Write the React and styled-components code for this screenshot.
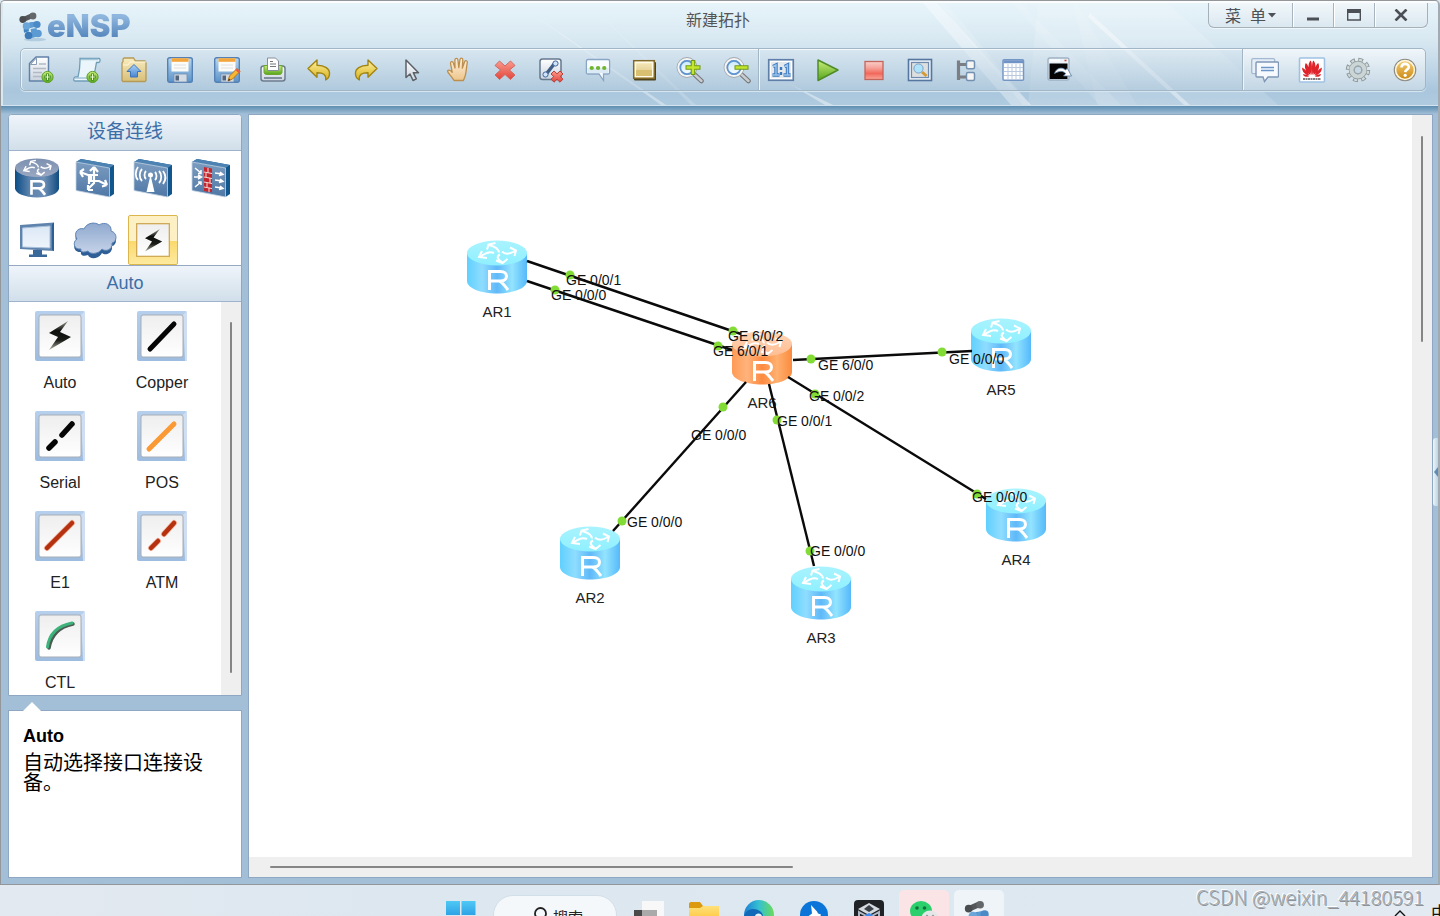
import React from 'react';
import styled, { createGlobalStyle } from 'styled-components';

const sans = '"Liberation Sans", "Noto Sans CJK SC", sans-serif';

const GlobalStyle = createGlobalStyle`
  * { box-sizing: border-box; }
  html, body { margin: 0; height: 100%; }
  #root { height: 100%; }
  body { font-family: ${sans}; color: #222; overflow: hidden; }
  button { font: inherit; color: inherit; border: 0; padding: 0; background: none; cursor: pointer; }
`;

const Desktop = styled.div`
  position: relative;
  height: 100vh;
  display: flex;
  flex-direction: column;
  overflow: hidden;
  background: #dde8f0;
`;

const Defs = styled.svg`
  position: absolute;
  width: 0;
  height: 0;
`;

/* ---------- window ---------- */

const Window = styled.div`
  position: relative;
  flex: 1;
  min-height: 0;
  display: flex;
  flex-direction: column;
  border: 1px solid #94979a;
  border-right: 2px solid #a3abb2;
  border-radius: 5px 5px 0 0;
  background: #a2bfd7;
  overflow: hidden;
`;

const Header = styled.header`
  position: relative;
  height: 105px;
  padding: 0 10px 0 17px;
  border-top: 2px solid #fbfdfe;
  border-left: 2px solid #d9e7f0;
  border-bottom: 1px solid #d4e3ee;
  background: linear-gradient(#e7f4fa, #d9e9f2 35%, #c3d9e8 60%, #a9c6dd 86%, #b0cbdf);
`;

const Shine = styled.svg`
  position: absolute;
  top: 0;
  right: 0;
  width: 920px;
  height: 102px;
  pointer-events: none;
`;

const TitleBar = styled.div`
  position: relative;
  display: grid;
  grid-template-columns: 1fr auto 1fr;
  height: 45px;
`;

const Brand = styled.div`
  display: flex;
  align-items: flex-start;
  padding-top: 7px;
  margin-left: -3px;
`;

const BrandName = styled.span`
  font: 900 31px/32px Inter, "Liberation Sans", sans-serif;
  color: transparent;
  background: linear-gradient(#8fb6de 20%, #5a8abf 80%);
  background-clip: text;
`;

const DocTitle = styled.h1`
  margin: 0;
  padding: 6px 12px 0 0;
  font: 400 16px/24px ${sans};
  color: #555;
`;

const Controls = styled.div`
  justify-self: end;
  display: flex;
  height: 25px;
  border: 1px solid #a5b0b9;
  border-top: 0;
  border-radius: 0 0 6px 6px;
  background: linear-gradient(#f1f7fa, #dbe8f0);
  box-shadow: 0 1px 0 #eef6fa;
`;

const ControlButton = styled.button`
  display: flex;
  align-items: center;
  justify-content: center;
  gap: 2px;
  width: ${(p) => p.$width}px;
  font-size: 16px;
  white-space: pre;
  color: #4c5258;
  & + & { border-left: 1px solid #a9b5be; box-shadow: inset 1px 0 0 #fff; }
`;

const Toolbar = styled.div`
  position: relative;
  display: flex;
  height: 43px;
  margin-right: 2px;
  border: 1px solid #a3b6c5;
  border-radius: 5px;
  background: linear-gradient(#e0ebf37a, #b6ccdd7a);
  box-shadow: inset 0 1px 0 #f2f8fb, inset 1px 0 0 #e8f1f7, 0 1px 1px #d8e8f3;
`;

const ToolGroup = styled.div`
  display: flex;
  align-items: center;
  justify-content: space-between;
  width: ${(p) => p.$width}px;
  padding: 0 ${(p) => (p.$lead ? 3 : 2)}px 0 ${(p) => (p.$lead ? 2 : 4)}px;
  ${(p) => p.$ruled && 'border-left: 1px solid #a3b6c5; box-shadow: inset 1px 0 0 #eef5f9;'}
  ${(p) => p.$end && 'margin-left: auto; background: linear-gradient(#f0f6fa, #c3d6e4); border-radius: 0 5px 5px 0;'}
`;

const ToolButton = styled.button`
  display: flex;
  align-items: center;
  justify-content: center;
  width: 36px;
  height: 36px;
`;

const Body = styled.div`
  flex: 1;
  min-height: 0;
  display: flex;
  gap: 6px;
  padding: 8px 5px 6px 7px;
  background: linear-gradient(#5d8db1, #a2bfd7 8px);
`;

const Sidebar = styled.aside`
  display: flex;
  flex-direction: column;
  gap: 14px;
  width: 234px;
`;

const Panel = styled.section`
  position: relative;
  border: 1px solid #8ea7c3;
  background: #fff;
`;

const DevicePanel = styled(Panel)`
  flex: 1;
  min-height: 0;
  display: flex;
  flex-direction: column;
  overflow: hidden;
  border-radius: 4px 4px 0 0;
`;

const SectionTitle = styled.h2`
  margin: 0;
  height: 36px;
  flex: none;
  font: 400 ${(p) => (p.$cjk ? 19 : 18)}px/34px ${sans};
  text-align: center;
  color: #3c6fa8;
  border-bottom: 1px solid #9fb3cd;
  background: linear-gradient(#eff4fa, #d1dfea);
`;

const DeviceGrid = styled.div`
  flex: none;
  display: grid;
  grid-template-columns: repeat(4, 50px);
  grid-auto-rows: 50px;
  gap: 12px 8px;
  padding: 2px 3px 0;
  border-bottom: 1px solid #95a9c2;
`;

const DeviceButton = styled.button`
  display: flex;
  align-items: center;
  justify-content: center;
  border: 1px solid ${(p) => (p.$active ? '#dcb54d' : 'transparent')};
  border-radius: 2px;
  background: ${(p) => (p.$active ? 'linear-gradient(#fdf0c4 52%, #fbd96c 53%, #fdeaa0)' : 'none')};
`;

const CableScroll = styled.div`
  flex: 1;
  min-height: 0;
  display: flex;
  overflow: hidden;
`;

const CableList = styled.div`
  flex: 1;
  display: grid;
  grid-template-columns: repeat(2, 102px);
  grid-auto-rows: 100px;
  padding-top: 9px;
`;

const CableButton = styled.button`
  display: flex;
  flex-direction: column;
  align-items: center;
  gap: 12px;
  height: 84px;
  font-size: 16px;
  line-height: 20px;
`;

const TrackV = styled.div`
  display: flex;
  justify-content: center;
  width: 20px;
  padding-top: ${(p) => p.$top}px;
  background: #efefef;
`;

const ThumbV = styled.div`
  width: 2px;
  height: ${(p) => p.$length};
  border-radius: 1px;
  background: #858585;
`;

const TrackH = styled.div`
  grid-column: 1 / 3;
  display: flex;
  align-items: center;
  padding-left: 21px;
  background: #efefef;
`;

const ThumbH = styled.div`
  width: 45%;
  height: 2px;
  border-radius: 1px;
  background: #858585;
`;

const InfoPanel = styled(Panel)`
  height: 168px;
  padding: 15px 28px 15px 14px;
  color: #000;
  &::before {
    content: '';
    position: absolute;
    top: -9px;
    left: 14px;
    border: 9px solid transparent;
    border-top: 0;
    border-bottom-color: #fff;
  }
`;

const InfoTitle = styled.h3`
  margin: 0 0 7px;
  font: 700 18px/20px ${sans};
`;

const InfoText = styled.p`
  margin: 0;
  font-size: 20px;
  line-height: 20px;
`;

const Workspace = styled.main`
  flex: 1;
  min-width: 0;
  display: grid;
  grid-template-columns: 1fr 20px;
  grid-template-rows: 1fr 20px;
  border: 1px solid #8ea7c3;
`;

const Canvas = styled.div`
  position: relative;
  overflow: hidden;
  background: #fff;
`;

const Links = styled.svg`
  position: absolute;
  inset: 0;
  width: 100%;
  height: 100%;
`;

const Node = styled.div`
  position: absolute;
  left: ${(p) => p.$x}px;
  top: ${(p) => p.$y}px;
  display: flex;
  flex-direction: column;
  align-items: center;
  gap: 9px;
  width: 60px;
  font-size: 15px;
  line-height: 18px;
`;

const PortLabel = styled.span`
  position: absolute;
  left: ${(p) => p.$x}px;
  top: ${(p) => p.$y}px;
  font-size: 14px;
  line-height: 16px;
  white-space: nowrap;
  color: #111;
`;

const Handle = styled.button`
  position: absolute;
  right: 0;
  top: 437px;
  display: flex;
  align-items: center;
  justify-content: flex-end;
  width: 5px;
  height: 68px;
  border-radius: 3px 0 0 3px;
  background: linear-gradient(90deg, #eef6fb, #bcd3e4);
`;

/* ---------- taskbar ---------- */

const Taskbar = styled.nav`
  position: relative;
  display: flex;
  justify-content: center;
  gap: 5px;
  height: 31px;
  overflow: hidden;
  background: linear-gradient(90deg, #e3e9f0, #dce7f0 30%, #dde8f0 80%, #e4eaf1);
`;

const TaskButton = styled.button`
  display: flex;
  justify-content: center;
  width: 50px;
  height: 44px;
  margin-top: 5px;
  padding-top: ${(p) => (p.$tint ? 8 : 10)}px;
  border-radius: 5px;
  background: ${(p) => p.$tint || 'none'};
`;

const Search = styled.label`
  display: flex;
  align-items: flex-start;
  gap: 5px;
  width: 124px;
  height: 40px;
  margin: 10px 2px 0;
  padding: 11px 0 0 39px;
  border-radius: 20px;
  border: 1px solid #d3dfe8;
  background: #f4f8fb;
`;

const SearchInput = styled.input`
  width: 60px;
  height: 20px;
  padding: 0;
  border: 0;
  background: none;
  font: 15px/18px ${sans};
  &::placeholder { color: #222; opacity: 1; }
`;

const Tray = styled.div`
  position: absolute;
  right: -8px;
  top: 20px;
  display: flex;
  gap: 25px;
  font-size: 17px;
  line-height: 18px;
  color: #111;
`;

const Watermark = styled.div`
  position: absolute;
  right: 16px;
  bottom: 8px;
  font: 20px/22px "Noto Sans CJK SC", sans-serif;
  font-weight: 300;
  color: #a7adb2;
  text-shadow: 1px 1px 0 #8d9398, -1px -1px 0 #fff;
`;

/* ---------- icons ---------- */

const Icon = ({ children, w = 28, h = 28, box }) => (
  <svg width={w} height={h} viewBox={box || `0 0 ${w} ${h}`} fill="none" aria-hidden="true">{children}</svg>
);

const Grad = ({ id, stops, h }) => (
  <linearGradient id={id} x1="0" y1="0" x2={h ? 1 : 0} y2={h ? 0 : 1}>
    {stops.map((c, i) => <stop key={i} offset={i / (stops.length - 1)} stopColor={c} />)}
  </linearGradient>
);

const SharedDefs = () => (
  <Defs aria-hidden="true">
    <defs>
      <Grad id="paper" stops={['#ffffff', '#c9d3df']} />
      <Grad id="green" stops={['#c9ee79', '#55a51c']} />
      <Grad id="gold" stops={['#fdf0a0', '#d8b21c']} />
      <Grad id="tan" stops={['#f8ecc0', '#d8bf79']} />
      <Grad id="blue" stops={['#a9d2f8', '#4a86cf']} />
      <Grad id="steel" stops={['#b9d7ef', '#5b93ca']} />
      <Grad id="red" stops={['#fb9a8c', '#e2453c']} />
      <Grad id="stop" stops={['#f9cfc9', '#f6a59c', '#f2695c', '#f9a79a']} />
      <Grad id="skin" stops={['#fff1dc', '#edc58b']} />
      <Grad id="glass" stops={['#cfeafa', '#f4fbff']} />
      <Grad id="amber" stops={['#f6d27a', '#c8840f']} />
      <Grad id="navy" stops={['#0a4c86', '#5d83ad', '#6c8fb6', '#114c80']} h />
      <Grad id="navyTop" stops={['#7c90b0', '#9aa8c2']} />
      <Grad id="face" stops={['#7c9cc0', '#4f78a6']} />
      <Grad id="cloud" stops={['#8fa9cf', '#c6d3e8']} />
      <Grad id="cyanBody" stops={['#5fd0ff', '#8fddff', '#5fb8f8', '#93e4ff', '#55b9fa']} h />
      <Grad id="cyanTop" stops={['#a9f3ff', '#8ff0ff']} />
      <Grad id="orangeBody" stops={['#ff9a55', '#ffb47c', '#fd8a40', '#ffb070', '#fb8b3e']} h />
      <Grad id="orangeTop" stops={['#ffd4b4', '#ffbd92']} />
      <Grad id="frame" stops={['#b5cfec', '#9dbcdf']} />
      <Grad id="card" stops={['#eeeeee', '#ffffff']} />
      <Grad id="bolt" stops={['#9a9a8c', '#0c0f0c', '#1a1c18', '#b5b5a8']} />
      <Grad id="win" stops={['#4fc9f5', '#0a78d4']} />
      <Grad id="folder" stops={['#ffe07a', '#fcb91c']} />
      <Grad id="edge" stops={['#1c7fd6', '#35c1d0', '#6bdb5a']} h />
      <Grad id="screen" stops={['#dce8f6', '#eef4fb']} />
    </defs>
  </Defs>
);

const PlusBadge = ({ x }) => (
  <g>
    <circle cx={x} cy="21" r="5.6" fill="url(#green)" stroke="#5c9e2c" />
    <path d={`M${x - 3.5} 21h7M${x} 17.5v7`} stroke="#2c7a12" strokeWidth="2.6" />
    <path d={`M${x - 3} 21h6M${x} 18v6`} stroke="#e9ffc4" strokeWidth="1.2" />
  </g>
);

const Floppy = ({ x = 1 }) => (
  <g transform={`translate(${x} 1)`}>
    <rect x=".7" y=".7" width="24.6" height="24.6" rx="2" fill="url(#steel)" stroke="#5580b4" strokeWidth="1.4" />
    <rect x="4.5" y="1.5" width="17" height="13" fill="#fbfbf8" />
    <rect x="4.5" y="1.2" width="17" height="3.6" fill="#f3a63c" />
    <path d="M7 8h12M7 11h12" stroke="#dfe0e2" />
    <rect x="7" y="17" width="13" height="8" fill="#d5dbe3" stroke="#6f8fb4" strokeWidth=".8" />
    <rect x="8.5" y="18.5" width="3.5" height="5" fill="#53667c" />
  </g>
);

const Lens = ({ minus }) => (
  <g>
    <path d="M18 18l7.5 7" stroke="#76797c" strokeWidth="4.6" strokeLinecap="round" />
    <path d="M18 18l7.5 7" stroke="#c9cccf" strokeWidth="2.4" strokeLinecap="round" />
    <circle cx="11" cy="11.5" r="8.6" stroke="#a4a9ae" strokeWidth="3.6" />
    <circle cx="11" cy="11.5" r="8.6" stroke="#f4f5f6" strokeWidth="2" />
    <circle cx="11" cy="11.5" r="6.6" fill="url(#glass)" stroke="#5d94d2" strokeWidth="1.6" />
    {minus ? (
      <g><path d="M11.5 11.5h14" stroke="#6f9a12" strokeWidth="4.6" /><path d="M12.5 11.5h12" stroke="#c5e62e" strokeWidth="2.4" /></g>
    ) : (
      <g><path d="M9.5 11.5h15M17 4v15" stroke="#6f9a12" strokeWidth="4.6" /><path d="M10.5 11.5h13M17 5v13" stroke="#c5e62e" strokeWidth="2.4" /></g>
    )}
  </g>
);

const undoPath = 'M3 12.5 12 4v5.2c7.500 0 13 3.600 12.500 8.800-.2 2.800-1.600 4.800-3.800 6 .6-5.400-2.600-7.400-8.700-7.300v4.600z';

const icons = {
  newTopo: (
    <g>
      <path d="M9 1h12.500v24H2.500V7.500z" fill="url(#paper)" stroke="#6181a8" strokeWidth="1.500" strokeLinejoin="round" />
      <path d="M9.500 2v6.500H3.500z" fill="#fff" stroke="#8b9cb2" />
      <path d="M12 8h7M6 12.500h13M6 16.500h9M6 20.500h8" stroke="#b3b9c2" strokeWidth="1.600" />
      <PlusBadge x={20.5} />
    </g>
  ),
  newPaper: (
    <g>
      <path d="M7 2.500h19c1.500 0 1.500 4-.5 4h-2L20 25H2c-2 0-1.500-4 .5-4H5C6.500 15 7 9 7 5z" fill="#eaf6fb" stroke="#6f9db8" strokeWidth="1.300" />
      <path d="M2 22h16M8 3.500h17" stroke="#a5c6d8" strokeWidth="1.500" />
      <PlusBadge x={19.5} />
    </g>
  ),
  open: (
    <g>
      <path d="M3 5.500V3.500c0-1 .5-1.500 1.500-1.500h9l2 3H25l1 2v17.500l-1 1H3l-1-1V7z" fill="url(#tan)" stroke="#b59a55" strokeWidth="1.300" />
      <path d="M3 9h5l2-3h16" stroke="#fff7dc" />
      <path d="M14 8.500l7 7h-3.500V21h-7v-5.500H7z" fill="url(#blue)" stroke="#3f74bd" strokeLinejoin="round" />
    </g>
  ),
  save: <Floppy />,
  saveAs: (
    <g>
      <Floppy />
      <path d="M15 25l1.500-5L24 12.500l3 3-7.500 7.500z" fill="#f7b733" stroke="#b8741a" strokeLinejoin="round" />
      <path d="M22.500 14l3 3L27 15.500l-3-3z" fill="#e8594c" />
      <path d="M15 25l1-2.500 1.500 1.500z" fill="#333" />
    </g>
  ),
  print: (
    <g>
      <rect x="2" y="10" width="24" height="15" rx="2.500" fill="url(#paper)" stroke="#6d7c90" strokeWidth="1.500" />
      <path d="M5 9.500h18v6.500c0 1.500-1 2.500-2.500 2.500h-13C6 18.500 5 17.500 5 16z" fill="url(#green)" stroke="#6fa52a" />
      <path d="M8.500 14.500V2h8l3 3v9.500z" fill="#fff" stroke="#888f98" />
      <path d="M11 5.500h3M11 8h6M11 10.500h6" stroke="#777" />
      <path d="M5 22h18" stroke="#64748a" strokeWidth="1.500" />
    </g>
  ),
  undo: <path d={undoPath} fill="url(#gold)" stroke="#a18412" strokeWidth="1.400" strokeLinejoin="round" />,
  redo: <path transform="translate(28 0) scale(-1 1)" d={undoPath} fill="url(#gold)" stroke="#a18412" strokeWidth="1.400" strokeLinejoin="round" />,
  pointer: <path d="M8 4v17.500l4-3.500 3 6.500 3.300-1.600-3-6.200h5.200z" fill="url(#paper)" stroke="#5c5f66" strokeWidth="1.500" strokeLinejoin="round" />,
  hand: (
    <path d="M9 24.500C6.500 20 3 17.500 2.600 15.300c.2-1.800 2.400-1.500 4.600.9L5.500 7.500c-.2-2.300 2.300-2.600 2.900-.5l1.600 5L9.900 4c.1-2.200 2.800-2.200 3 0l.9 7.700 1.200-8.200c.5-2 2.900-1.600 2.800.4l-.5 8.300 2.300-6.500c.9-1.900 3.100-1 2.700 1-.8 4-1 8-1.700 11.500-.4 2.200-1.300 4.300-2.200 6.300z" fill="url(#skin)" stroke="#bd8f4e" strokeWidth="1.300" strokeLinejoin="round" />
  ),
  remove: <path d="M8.500 5l5.500 5 5.500-5L24 9.500 18.500 14l5.500 5-4.500 4.500L14 18.500l-5.500 5L4 19l5.500-5L4 9.500z" fill="url(#red)" stroke="#cc6a64" strokeLinejoin="round" />,
  removeLink: (
    <g>
      <rect x="3" y="3" width="21" height="20.500" rx="2.500" fill="url(#paper)" stroke="#66788d" strokeWidth="1.500" />
      <path d="M8.500 19l9-11.500" stroke="#3f5f86" strokeWidth="3.400" />
      <circle cx="8.500" cy="18.500" r="2.600" fill="#cfe4fa" stroke="#40669a" />
      <circle cx="18.500" cy="7.500" r="2.600" fill="#cfe4fa" stroke="#40669a" />
      <path d="M17 15l3 2.800 3-2.800 3 3-2.800 2.500 2.800 2.700-3 3-3-2.900-3 2.900-3-3 2.800-2.700L14 18z" fill="url(#red)" stroke="#b53f38" strokeLinejoin="round" />
    </g>
  ),
  text: (
    <g>
      <path d="M4 3.500h20c1 0 1.600.6 1.600 1.600v11.300c0 1-.6 1.600-1.600 1.600h-4.500v6.500L15 18H4c-1 0-1.600-.6-1.600-1.600V5.100c0-1 .6-1.600 1.600-1.600z" fill="#f8fcff" stroke="#8aa6c6" strokeWidth="1.300" />
      <path d="M3.500 12h21v5h-21z" fill="#dceaf6" />
      <path d="M7.700 12h.1M14 12h.1M20.200 12h.1" stroke="#6fb52e" strokeWidth="4.200" strokeLinecap="round" />
    </g>
  ),
  palette: (
    <g>
      <rect x="4" y="6" width="22" height="18.500" rx="1" fill="#4e431c" />
      <rect x="3.700" y="4.700" width="20.600" height="17.600" fill="url(#tan)" stroke="#80692a" strokeWidth="1.500" />
      <rect x="5.500" y="6.500" width="17" height="14" stroke="#fffbe6" strokeWidth="1.400" />
      <path d="M6 14h16v6H6z" fill="#d9c071" />
    </g>
  ),
  zoomIn: <Lens />,
  zoomOut: <Lens minus />,
  fit: (
    <g>
      <rect x="1.700" y="3.700" width="24.600" height="20.600" fill="#e4e9ee" stroke="#5f7fa8" strokeWidth="1.600" />
      <rect x="3.500" y="5.500" width="21" height="17" stroke="#fff" />
      <path d="M6 10.500l3-1.500v10M5.500 19h7M17.500 10.500l3-1.500v10M16.500 19h7" stroke="#3b78bd" strokeWidth="3.400" />
      <path d="M6 10.500l3-1.500v10M5.500 19h7M17.500 10.500l3-1.500v10M16.500 19h7" stroke="#9cc4ee" strokeWidth="1.400" />
      <path d="M14 11v3M14 16v3" stroke="#3b78bd" strokeWidth="2.400" />
    </g>
  ),
  start: <path d="M5 4v20.500L25 14z" fill="url(#green)" stroke="#4f8c27" strokeWidth="1.500" strokeLinejoin="round" />,
  stop: <rect x="5" y="5.500" width="18" height="18" fill="url(#stop)" stroke="#c4655c" strokeWidth="1.300" />,
  capture: (
    <g>
      <rect x="2.500" y="3.500" width="23" height="21" fill="#e9f0f6" stroke="#55779f" strokeWidth="1.600" />
      <rect x="5.500" y="6.500" width="17" height="15" fill="#dedfdf" stroke="#6f8cb0" strokeWidth="1.200" />
      <path d="M16 16l4.500 4" stroke="#d49b34" strokeWidth="3" />
      <circle cx="12.500" cy="12.500" r="4.600" fill="#aee3fb" stroke="#7ba2c6" />
    </g>
  ),
  tree: (
    <g>
      <path d="M6.500 4.500V24M6.500 8.500H15M6.500 21H15" stroke="#7b7f84" strokeWidth="3.200" />
      <rect x="14.500" y="4.700" width="8" height="8" rx="1.500" fill="#f6f6f4" stroke="#7390b0" strokeWidth="1.500" />
      <rect x="14.500" y="16.500" width="8" height="8" rx="1.500" fill="#f6f6f4" stroke="#7390b0" strokeWidth="1.500" />
    </g>
  ),
  grid: (
    <g>
      <rect x="4" y="3.700" width="20.500" height="20.600" rx="1" fill="#fff" stroke="#7496c4" strokeWidth="1.500" />
      <path d="M4.500 5.800h19.500" stroke="#6f93c4" strokeWidth="3" />
      <path d="M5 11.500h19M5 15.500h19M5 19.500h19M9 8v16M13 8v16M17 8v16M21 8v16" stroke="#b9c9df" />
    </g>
  ),
  console: (
    <g>
      <rect x="3" y="2" width="21" height="22" rx="2" fill="#edf2f6" stroke="#9eb2c4" strokeWidth="1.400" />
      <rect x="4.500" y="7.500" width="18" height="15.500" fill="#050505" />
      <path d="M5 4.500h10" stroke="#fff" strokeWidth="2" />
      <path d="M19.500 4.500h2" stroke="#d0453a" strokeWidth="1.500" />
      <path d="M9.500 17.500c1.500-5.500 7.500-7 11-3.500l1.800-1.800 4.200 7.800h-8l2.200-2.600c-3-2.800-6.200-2.600-11.200.1z" fill="#fff" stroke="#54779b" strokeWidth=".8" />
    </g>
  ),
  forum: (
    <g>
      <rect x="0.700" y="2.700" width="23" height="15" rx="1.500" fill="#e6eff8" stroke="#a3b9d1" strokeWidth="1.300" />
      <path d="M6 6h20.500c.6 0 1 .4 1 1v13c0 .6-.4 1-1 1H17l-3.500 4.500L12 21H6c-.6 0-1-.4-1-1V7c0-.6.4-1 1-1z" fill="#f6faff" stroke="#8097b6" strokeWidth="1.400" />
      <path d="M10 11.500h13M10 14.500h13" stroke="#6c95c8" strokeWidth="1.300" />
    </g>
  ),
  huawei: (
    <g>
      <rect x="1.500" y="2" width="25" height="24" rx="1" fill="#fff" stroke="#9fc2e4" strokeWidth="1.600" />
      <path d="M13.600 19C10 14 9.500 8 12.500 4.500c1.600 1 1.800 8 1.100 14.500zM14.400 19C18 14 18.500 8 15.500 4.500c-1.600 1-1.800 8-1.100 14.500zM12.500 19C7.500 15.500 5.700 11 7.800 7c2.200 1.500 4 6.500 4.700 12zM15.500 19c5-3.500 6.800-8 4.700-12-2.200 1.500-4 6.500-4.700 12zM11.500 19.500C7 19 3.800 15.500 4.200 11.500c3 1.500 5.500 4.500 7.300 8zM16.500 19.500c4.500-.5 7.700-4 7.300-8-3 1.500-5.500 4.500-7.300 8zM11 20.400c-2.500.8-5 .2-6.200-2.200 2.400-.3 4.700.6 6.200 2.200zM17 20.400c2.500.8 5 .2 6.200-2.200-2.400-.3-4.700.6-6.200 2.200z" fill="#e0242c" />
      <path d="M5 23h18" stroke="#5c5355" strokeWidth="1.600" strokeDasharray="2 .5" />
    </g>
  ),
  settings: (
    <g>
      <circle cx="14" cy="14" r="10" stroke="#8b9698" strokeWidth="4.400" strokeDasharray="4.600 3.254" />
      <circle cx="14" cy="14" r="9.600" stroke="#d0d9d9" strokeWidth="3.400" strokeDasharray="2.800 4.740" strokeDashoffset="-.8" />
      <circle cx="14" cy="14" r="6.500" stroke="#8b9698" strokeWidth="5.400" />
      <circle cx="14" cy="14" r="6.500" stroke="#cbd5d6" strokeWidth="4.200" />
      <circle cx="14" cy="14" r="3.800" fill="#c6d8e4" stroke="#929fa2" />
    </g>
  ),
  help: (
    <g>
      <circle cx="14" cy="14" r="10.700" fill="url(#amber)" stroke="#8d8b86" strokeWidth="1.200" />
      <circle cx="14" cy="14" r="9.400" stroke="#fff7df" strokeWidth="1.500" />
      <path d="M10.500 11.500c.2-5 7.500-4.500 7.300-.4-.2 2.500-3.500 2.500-3.600 5" stroke="#fff" strokeWidth="2.600" />
      <circle cx="14.200" cy="19.300" r="1.600" fill="#fff" />
    </g>
  ),
};

const LogoMark = ({ w = 30, h = 32 }) => (
  <svg width={w} height={h} viewBox="0 0 30 32" aria-hidden="true">
    <ellipse cx="18" cy="29.500" rx="11" ry="1.800" fill="#a3c0d8" opacity=".7" />
    <path d="M6.500 9.500l9-4" stroke="#55585b" strokeWidth="5" />
    <circle cx="5.800" cy="9.500" r="3.400" fill="#4a4d50" />
    <circle cx="16" cy="6" r="3.400" fill="#63676a" />
    <path d="M19 14.500c-7-.5-11 2-9.500 7.500" stroke="#3f82c0" strokeWidth="5" fill="none" />
    <path d="M8 16.500l11-2.500M14 21.500l6-1M11 26.500l10-3" stroke="#5b9bd2" strokeWidth="5" />
    <circle cx="9.500" cy="16" r="3.800" fill="#6ba6da" />
    <circle cx="20" cy="14.500" r="3.600" fill="#4a8ac6" />
    <circle cx="11.500" cy="25.500" r="3.800" fill="#3b79b8" />
    <circle cx="21" cy="23.500" r="3.800" fill="#5c9ad3" />
  </svg>
);

const Arrows = () => (
  <g stroke="#fff" strokeWidth="2" fill="none">
    <path d="M32 12.500C31.500 8.500 28 6.500 22 5M28.500 3l-7 1.500-1.500 5" />
    <path d="M35 11.500c3.500 3.500 8 2.500 13-.5M43 7.500l6 3-1.500 5.500" />
    <path d="M27 13c-4-2-9 0-14 4M15 11l-3 6 8 1" />
    <path d="M33 14.500c-4 2-2.500 5 2.500 8M29 20.500l6.500 2.500 5-4" />
  </g>
);

const Router = ({ tone, w = 60, h = 54 }) => (
  <svg width={w} height={h} viewBox="0 0 60 54" role="img" aria-label="router">
    <path d="M0 13v28c0 7 13.500 12.500 30 12.500S60 48 60 41V13z" fill={`url(#${tone === 'navy' ? 'navy' : `${tone}Body`})`} />
    <ellipse cx="30" cy="13" rx="30" ry="12.500" fill={`url(#${tone}Top)`} />
    <Arrows />
    <path d="M22.500 50V31.500h11c8 0 8 9.500 0 9.500h-11M32 41c3 .5 6 5 9 9" stroke="#fff" strokeWidth={tone === 'navy' ? 3.600 : 3} fill="none" />
  </svg>
);

const DeviceBox = ({ children }) => (
  <Icon w={42} h={42}>
    <path d="M2 5l5-3 33 6v29l-4.500 3z" fill="#11568d" />
    <path d="M2 5l5-3 33 6-4.500 3z" fill="#4d83b3" />
    <path d="M2 5l33.500 6v29L2 33.500z" fill="url(#face)" stroke="#c4d3e3" strokeWidth=".8" />
    {children}
  </Icon>
);

const Bolt = ({ x = 0, y = 0 }) => (
  <path transform={`translate(${x} ${y})`} d="M19 0L0 12l9 4L0 29l22-13L11 11z" fill="url(#bolt)" />
);

const devices = [
  ['路由器', <Router key="r" tone="navy" w={44} h={40} />],
  ['交换机', (
    <DeviceBox key="s">
      <path d="M6 15l8 3h10M6 15l4-3M6 15l3 5M20 10v16l-6 6M20 10l-4 4M20 10l4 5M14 33v-5M14 33h5M33 28l-8-4H15v-6M33 28l-2-5M33 28l-5 1.500M20 18h-3v6M15 27v-9" stroke="#fff" strokeWidth="2.200" />
    </DeviceBox>
  )],
  ['无线局域网', (
    <DeviceBox key="w">
      <path d="M18.500 18l4 17h-8z" fill="#fff" />
      <circle cx="18.500" cy="18" r="2.500" fill="#fff" />
      <path d="M14 14c-2 2-2 6 0 8M10 12c-3 3-3 9 0 12M6 10c-3 4-3 10 0 13M23 15c2 2 2 6 0 8M27 14c3 3 3 9 0 12M31 14c3 4 3 9 0 13" stroke="#fff" strokeWidth="1.800" />
    </DeviceBox>
  )],
  ['防火墙', (
    <DeviceBox key="f">
      <path d="M14 10l8 1.500v24L14 34z" fill="#c2272d" />
      <path d="M14 15l8 1.500M14 20l8 1.500M14 25l8 1.500M14 30l8 1.500M18 11v5M16 16v4M20 21v5M17 26v4M19 31v4" stroke="#f3d9d9" />
      <path d="M5 11l6 5M4 20h7M5 30l6-5M25 16l7 1M25 23l7 1M25 30l7 1M11 13v3.500H8M8 18l3.500 2L8 22M11 28v-3H8M30 15l3 2.500-4 1M30 22l3 2.500-4 1M30 29l3 2.500-4 1" stroke="#fff" strokeWidth="1.500" />
    </DeviceBox>
  )],
  ['终端', (
    <Icon key="p" w={38} h={38}>
      <path d="M2 4l34-2.500V30L2 28z" fill="#5e83ad" />
      <path d="M36 1.500V30l-2-1V3z" fill="#2c5f95" />
      <path d="M4.500 7L32 5v22L4.500 26z" fill="url(#screen)" stroke="#a9c0da" />
      <path d="M15 29h9v4.500h5V36H11v-2.500h4z" fill="#39689b" />
    </Icon>
  )],
  ['其它设备', (
    <Icon key="c" w={46} h={40}>
      <path d="M9 30c-7 1-9-7-4-10-4-6 1-12 7-10 3-7 12-7 15-4 6-4 13 0 12 6 7 2 6 11 1 12 1 8-7 10-10 7-4 7-13 6-14 2-5 2-8 0-7-3z" fill="#2e5f96" transform="translate(0 2)" />
      <path d="M9 29c-7 1-9-7-4-10-4-6 1-12 7-10 3-7 12-7 15-4 6-4 13 0 12 6 7 2 6 11 1 12 1 7-7 9-10 6-4 6-13 5-14 2-5 2-8 1-7-2z" fill="url(#cloud)" stroke="#5f85b4" />
    </Icon>
  )],
  ['设备连线', (
    <Icon key="l" w={34} h={34}>
      <rect x=".7" y=".7" width="32.600" height="32.600" fill="url(#card)" stroke="#cba34c" strokeWidth="1.200" />
      <g transform="translate(9 6) scale(.78)"><Bolt /></g>
    </Icon>
  )],
];

const CableIcon = ({ children }) => (
  <Icon w={50} h={50}>
    <rect width="50" height="50" rx="2" fill="url(#frame)" />
    <path d="M46 4l4-4v50h-2z" fill="#cfdff1" />
    <rect x="4" y="4" width="42" height="42" rx="2" fill="url(#card)" stroke="#a7aeb7" />
    {children}
  </Icon>
);

const Stroke = ({ d, color, width = 5, edge }) => (
  <g strokeLinecap="round">
    {edge && <path d={d} stroke={edge} strokeWidth={width + 1.5} />}
    <path d={d} stroke={color} strokeWidth={width} />
  </g>
);

const cables = [
  ['Auto', <Bolt key="a" x={14} y={10} />],
  ['Copper', <Stroke key="c" d="M13 38L37 13" color="#060606" />],
  ['Serial', <Stroke key="s" d="M14 37l6-6M27 24l10-11" color="#060606" width={5.5} />],
  ['POS', <Stroke key="p" d="M12 38L37 13" color="#fb9a35" />],
  ['E1', <Stroke key="e" d="M12 37L37 12" color="#b5310f" edge="#f4b9a4" width={4.500} />],
  ['ATM', <Stroke key="t" d="M14 37l7-7M27 23l10-11" color="#b5310f" edge="#f4b9a4" width={4.500} />],
  ['CTL', (
    <g key="l">
      <Stroke d="M14 37C16 25 23 16 38 13" color="#4b5a52" width={3.500} />
      <Stroke d="M12.500 36C14 24 22 15 37 12" color="#3db27a" width={3} />
    </g>
  )],
];

/* ---------- data ---------- */

const mainTools = [
  ['新建拓扑', 'newTopo'], ['新建试卷工程', 'newPaper'], ['打开', 'open'], ['保存', 'save'],
  ['另存为', 'saveAs'], ['打印', 'print'], ['撤销', 'undo'], ['恢复', 'redo'],
  ['选择', 'pointer'], ['拖动', 'hand'], ['删除', 'remove'], ['删除连线', 'removeLink'],
  ['文本', 'text'], ['调色板', 'palette'], ['放大', 'zoomIn'], ['缩小', 'zoomOut'],
];
const viewTools = [
  ['原始大小', 'fit'], ['开启设备', 'start'], ['停止设备', 'stop'], ['数据抓包', 'capture'],
  ['显示接口', 'tree'], ['显示网格', 'grid'], ['打开命令行', 'console'],
];
const helpTools = [['论坛', 'forum'], ['华为官网', 'huawei'], ['设置', 'settings'], ['帮助', 'help']];

const nodes = [
  { name: 'AR1', x: 218, y: 125 },
  { name: 'AR6', x: 483, y: 216, tone: 'orange' },
  { name: 'AR5', x: 722, y: 203 },
  { name: 'AR4', x: 737, y: 373 },
  { name: 'AR3', x: 542, y: 451 },
  { name: 'AR2', x: 311, y: 411 },
];

const links = [
  [278, 146, 492, 219],
  [278, 166, 483, 235],
  [544, 245, 723, 236],
  [539, 262, 737, 384],
  [520, 269, 565, 451],
  [497, 267, 364, 416],
];

const ports = [
  { dot: [321, 160], label: [317, 157], text: 'GE 0/0/1' },
  { dot: [306, 175], label: [302, 172], text: 'GE 0/0/0' },
  { dot: [484, 216], label: [479, 213], text: 'GE 6/0/2' },
  { dot: [469, 231], label: [464, 228], text: 'GE 6/0/1' },
  { dot: [562, 244], label: [569, 242], text: 'GE 6/0/0' },
  { dot: [693, 237], label: [700, 236], text: 'GE 0/0/0' },
  { dot: [566, 279], label: [560, 273], text: 'GE 0/0/2' },
  { dot: [528, 305], label: [528, 298], text: 'GE 0/0/1' },
  { dot: [474, 292], label: [442, 312], text: 'GE 0/0/0' },
  { dot: [373, 406], label: [378, 399], text: 'GE 0/0/0' },
  { dot: [561, 436], label: [561, 428], text: 'GE 0/0/0' },
  { dot: [728, 379], label: [723, 374], text: 'GE 0/0/0' },
];

const Tools = ({ items }) => items.map(([label, key]) => (
  <ToolButton key={key} type="button" aria-label={label} title={label}>
    <Icon>{icons[key]}</Icon>
  </ToolButton>
));

const tasks = [
  ['任务视图', null, (
    <Icon w={30} h={30}><rect x="8" y="1" width="22" height="22" fill="#f8f8f8" /><rect x="0" y="10" width="23" height="20" fill="#4a4a4a" /><rect x="8" y="10" width="15" height="13" fill="#aaa" /></Icon>
  )],
  ['文件资源管理器', null, (
    <Icon w={30} h={28}><path d="M0 4c0-1 .5-2 2-2h9l3 4h15v8H0z" fill="#dc9a10" /><path d="M0 8h11l3-2h16v22H0z" fill="url(#folder)" /></Icon>
  )],
  ['Edge', null, (
    <Icon w={30} h={30}><circle cx="15" cy="15" r="15" fill="url(#edge)" /><path d="M0 16c2-8 12-9 17-4 3 3 2 6 0 7l-6-3c-2 5 0 10 4 14C6 30 0 24 0 16z" fill="#1169b8" /><circle cx="14.500" cy="17" r="3.500" fill="#e6f2fa" /></Icon>
  )],
  ['迅雷', null, (
    <Icon w={28} h={28}><circle cx="14" cy="15" r="14" fill="#0b74d8" /><path d="M11 5l6 6.500 1 2 3 1-1 3 2 6-7-2-7-5 4-3z" fill="#fff" /></Icon>
  )],
  ['eNSP 虚拟机', null, (
    <Icon w={30} h={30}><rect width="30" height="30" rx="4" fill="#202226" /><path d="M15 3l11 6-11 6L4 9z" fill="#d5dae0" /><path d="M15 5l5 4-5 3-5-3z" fill="#3b3f46" /><path d="M5 12l9 5v10l-9-5zM25 12l-9 5v10l9-5z" stroke="#aeb8c6" strokeWidth="2" /><path d="M15 13l4 2-4 3-4-3z" fill="#3f8ef0" /></Icon>
  )],
  ['微信', '#fbe4e6', (
    <Icon w={30} h={30}><ellipse cx="12" cy="13" rx="11" ry="10" fill="#2bcf6b" /><circle cx="8" cy="10" r="1.800" fill="#14703a" /><circle cx="15.500" cy="10" r="1.800" fill="#14703a" /><ellipse cx="21" cy="20" rx="8.500" ry="7.500" fill="#e4e6e8" /><circle cx="18" cy="18" r="1.200" fill="#999" /><circle cx="24" cy="18" r="1.200" fill="#999" /></Icon>
  )],
  ['eNSP', '#eef4f8', <LogoMark w={34} h={36} />],
];

export default function App() {
  return (
    <Desktop>
      <GlobalStyle />
      <SharedDefs />
      <Window>
        <Header>
          <Shine viewBox="520 0 920 102" preserveAspectRatio="none" aria-hidden="true">
            <g fill="#fff">
              <path d="M925 0h14l94 102h-20z" opacity=".35" />
              <path d="M940 0h8l85 102h-8z" opacity=".15" />
              <path d="M1015 0h8l100 102h-22z" opacity=".12" />
              <path d="M1040 0h130l110 102h-250z" opacity=".14" />
              <path d="M1092 10l100 92h-6L1090 14z" opacity=".4" />
              <path d="M1075 0h4l60 102h-40z" opacity=".1" />
              <path d="M530 8l138 94h-5z" opacity=".35" />
              <path d="M600 10l98 92h-5z" opacity=".18" />
              <path d="M790 80l45 22h-8z" opacity=".4" />
            </g>
          </Shine>
          <TitleBar>
            <Brand>
              <LogoMark />
              <BrandName>eNSP</BrandName>
            </Brand>
            <DocTitle>新建拓扑</DocTitle>
            <Controls>
              <ControlButton type="button" $width={83}>
                {'菜  单'}
                <Icon w={8} h={6}><path d="M0 1h8L4 5.500z" fill="#4c5258" /></Icon>
              </ControlButton>
              <ControlButton type="button" $width={41} aria-label="最小化">
                <Icon w={14} h={14}><path d="M1 11h12" stroke="#4c5056" strokeWidth="3" /></Icon>
              </ControlButton>
              <ControlButton type="button" $width={41} aria-label="最大化">
                <Icon w={14} h={12}><path d="M.7 1h12.600v10H.7z" stroke="#4c5056" strokeWidth="1.400" /><path d="M0 2h14" stroke="#4c5056" strokeWidth="4" /></Icon>
              </ControlButton>
              <ControlButton type="button" $width={53} aria-label="关闭">
                <Icon w={14} h={12}><path d="M1.500 0.500l11 11M12.500 0.500l-11 11" stroke="#4c5056" strokeWidth="2.600" /></Icon>
              </ControlButton>
            </Controls>
          </TitleBar>
          <Toolbar role="toolbar" aria-label="工具栏">
            <ToolGroup $width={737} $lead><Tools items={mainTools} /></ToolGroup>
            <ToolGroup $width={321} $ruled><Tools items={viewTools} /></ToolGroup>
            <ToolGroup $width={183} $ruled $end><Tools items={helpTools} /></ToolGroup>
          </Toolbar>
        </Header>
        <Body>
          <Sidebar>
            <DevicePanel>
              <SectionTitle $cjk>设备连线</SectionTitle>
              <DeviceGrid>
                {devices.map(([label, icon]) => (
                  <DeviceButton key={label} type="button" aria-label={label} $active={label === '设备连线'}>
                    {icon}
                  </DeviceButton>
                ))}
              </DeviceGrid>
              <SectionTitle>Auto</SectionTitle>
              <CableScroll>
                <CableList>
                  {cables.map(([name, drawing]) => (
                    <CableButton key={name} type="button">
                      <CableIcon>{drawing}</CableIcon>
                      {name}
                    </CableButton>
                  ))}
                </CableList>
                <TrackV $top={20}><ThumbV $length="94%" /></TrackV>
              </CableScroll>
            </DevicePanel>
            <InfoPanel>
              <InfoTitle>Auto</InfoTitle>
              <InfoText>自动选择接口连接设备。</InfoText>
            </InfoPanel>
          </Sidebar>
          <Workspace>
            <Canvas>
              {nodes.map((n) => (
                <Node key={n.name} $x={n.x} $y={n.y}>
                  <Router tone={n.tone || 'cyan'} />
                  {n.name}
                </Node>
              ))}
              <Links aria-hidden="true">
                {links.map(([x1, y1, x2, y2]) => (
                  <line key={`${x1}-${y1}`} x1={x1} y1={y1} x2={x2} y2={y2} stroke="#0a0a0a" strokeWidth="2.400" />
                ))}
                {ports.map(({ dot: [x, y] }) => <circle key={`${x}-${y}`} cx={x} cy={y} r="4.500" fill="#83dc35" />)}
              </Links>
              {ports.map(({ label: [x, y], text }) => (
                <PortLabel key={`${x}-${y}`} $x={x} $y={y}>{text}</PortLabel>
              ))}
            </Canvas>
            <TrackV $top={21}><ThumbV $length="206px" /></TrackV>
            <TrackH><ThumbH /></TrackH>
          </Workspace>
        </Body>
        <Handle type="button" aria-label="展开面板">
          <Icon w={4} h={10}><path d="M4 0v10L0 5z" fill="#5f8cb0" /></Icon>
        </Handle>
      </Window>
      <Taskbar>
        <TaskButton type="button" aria-label="开始">
          <Icon w={30} h={30}><path d="M0 1h14v14H0zM15.500 1h14v14h-14zM0 16.500h14v14H0zM15.500 16.500h14v14h-14z" fill="url(#win)" /></Icon>
        </TaskButton>
        <Search>
          <Icon w={15} h={18}><circle cx="7.500" cy="6.500" r="5.500" stroke="#222" strokeWidth="1.800" /><path d="M4 11l-3 4" stroke="#222" strokeWidth="1.800" /></Icon>
          <SearchInput type="text" placeholder="搜索" aria-label="搜索" />
        </Search>
        {tasks.map(([label, tint, icon]) => (
          <TaskButton key={label} type="button" aria-label={label} $tint={tint}>{icon}</TaskButton>
        ))}
        <Tray>
          <Icon w={12} h={16}><path d="M1 11l5-5 5 5" stroke="#111" strokeWidth="1.400" /></Icon>
          <span>中</span>
        </Tray>
      </Taskbar>
      <Watermark>CSDN @weixin_44180591</Watermark>
    </Desktop>
  );
}
